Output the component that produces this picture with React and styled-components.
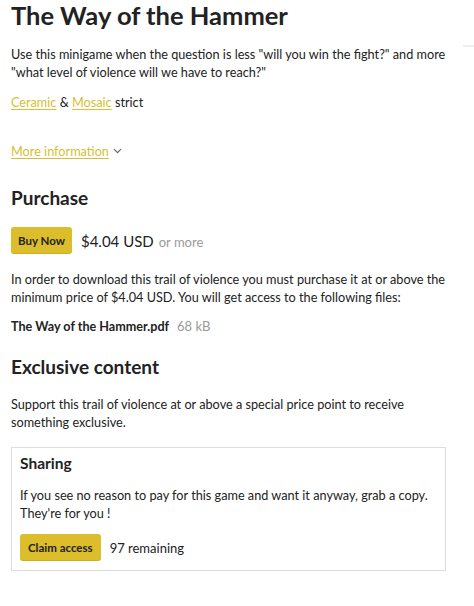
import React from "react";
import styled, { createGlobalStyle } from "styled-components";

const Global = createGlobalStyle`
  html, body { margin: 0; padding: 0; background: #fff; }
  body { font-family: Lato, "Open Sans", sans-serif; color: #222; }
`;

const Page = styled.div`
  width: 474px;
  height: 606px;
  overflow: hidden;
  position: relative;
`;

const Column = styled.div`
  width: 440px;
  padding: 0 0 0 11px;
  display: flex;
  flex-direction: column;
  align-items: stretch;
`;

const Title = styled.h1`
  margin: 0;
  font-size: 25.5px;
  font-weight: 700;
  line-height: 30px;
  color: #222;
  white-space: nowrap;
`;

const Text = styled.p`
  margin: ${(p) => p.$m || "0"};
  font-size: 12.7px;
  line-height: 17.5px;
  color: #222;
`;

const Link = styled.a`
  color: #d6bf33;
  text-decoration: underline;
  text-underline-offset: 2px;
  cursor: pointer;
`;

const MoreRow = styled.div`
  margin-top: 31px;
  display: flex;
  align-items: center;
  gap: 4px;
  font-size: 12.7px;
  line-height: 17.5px;
`;

const Section = styled.h2`
  margin: ${(p) => p.$m || "0"};
  font-size: 19px;
  font-weight: 700;
  line-height: 24px;
  color: #222;
`;

const BuyRow = styled.div`
  display: flex;
  align-items: center;
  gap: 9px;
  margin-top: 17px;
`;

const Button = styled.button`
  border: none;
  border-radius: 3px;
  background: #dcbd2c;
  color: #222;
  font-family: inherit;
  font-weight: 700;
  font-size: 11.5px;
  height: 27px;
  padding: 0 ${(p) => p.$px || "8px"};
  box-shadow: inset 0 -1px 0 rgba(0, 0, 0, 0.08);
`;

const Price = styled.span`
  font-size: 15px;
  font-weight: 400;
  color: #222;
`;

const Muted = styled.span`
  font-size: ${(p) => p.$s || "13px"};
  color: #9a9a9a;
  margin-left: ${(p) => p.$ml || "0"};
`;

const FileRow = styled.div`
  margin-top: 11px;
  font-size: 12.6px;
  line-height: 18px;
  display: flex;
  align-items: baseline;
  gap: 8px;
`;

const FileName = styled.strong`
  font-weight: 700;
`;

const Card = styled.div`
  margin-top: 16px;
  border: 1px solid #dedede;
  width: 435px;
  box-sizing: border-box;
  padding: 5px 8px 9px 8px;
`;

const CardTitle = styled.h3`
  margin: 0;
  font-size: 15.5px;
  line-height: 20px;
  font-weight: 700;
`;

const ClaimRow = styled.div`
  display: flex;
  align-items: center;
  gap: 9px;
  margin-top: 12px;
  font-size: 13px;
`;

const EdgeLine = styled.div`
  position: absolute;
  right: 0;
  top: 45px;
  width: 11px;
  height: 2px;
  background: #efefef;
`;

export default function App() {
  return (
    <Page>
      <Global />
      <EdgeLine />
      <Column>
        <Title>The Way of the Hammer</Title>
        <Text $m="16px 0 0 0">
          Use this minigame when the question is less "will you win the fight?" and more "what level of violence will we have to reach?"
        </Text>
        <Text $m="13px 0 0 0">
          <Link>Ceramic</Link> &amp; <Link>Mosaic</Link> strict
        </Text>
        <MoreRow>
          <Link>More information</Link>
          <svg width="9" height="6" viewBox="0 0 9 6" fill="none">
            <path d="M1 1.2l3.5 3.5 3.5-3.5" stroke="#666" strokeWidth="1.2" />
          </svg>
        </MoreRow>
        <Section $m="26px 0 0 0">Purchase</Section>
        <BuyRow>
          <Button $px="7px">Buy Now</Button>
          <Price>
            $4.04 USD<Muted $ml="5px">or more</Muted>
          </Price>
        </BuyRow>
        <Text $m="17px 0 0 0">
          In order to download this trail of violence you must purchase it at or above the minimum price of $4.04 USD. You will get access to the following files:
        </Text>
        <FileRow>
          <FileName>The Way of the Hammer.pdf</FileName>
          <Muted>68 kB</Muted>
        </FileRow>
        <Section $m="19px 0 0 0">Exclusive content</Section>
        <Text $m="17px 0 0 0">
          Support this trail of violence at or above a special price point to receive something exclusive.
        </Text>
        <Card>
          <CardTitle>Sharing</CardTitle>
          <Text $m="14px 0 0 0">
            If you see no reason to pay for this game and want it anyway, grab a copy. They're for you !
          </Text>
          <ClaimRow>
            <Button>Claim access</Button>
            <span>97 remaining</span>
          </ClaimRow>
        </Card>
      </Column>
    </Page>
  );
}
